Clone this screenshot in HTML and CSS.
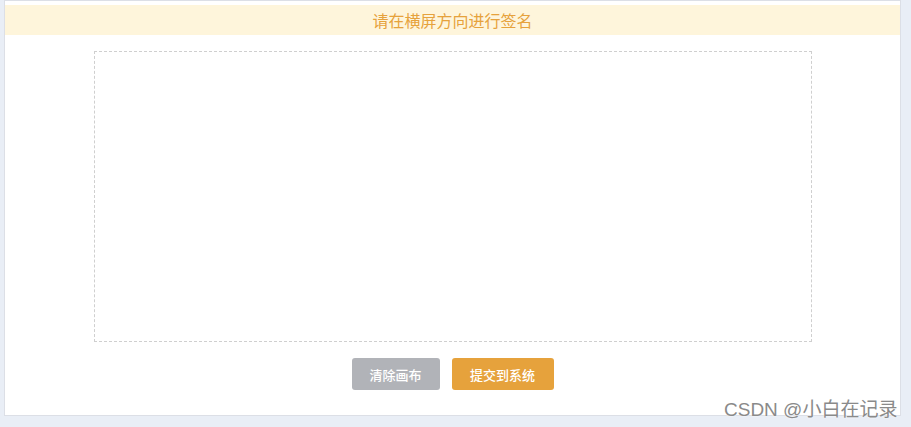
FILE: index.html
```html
<!DOCTYPE html>
<html lang="zh">
<head>
  <meta charset="UTF-8">
  <title>签名</title>
  <link rel="stylesheet" href="styles.css">
</head>
<body>
  <div class="panel">
    <div class="tip">请在横屏方向进行签名</div>
    <div class="board"></div>
    <div class="actions">
      <button class="btn btn-clear">清除画布</button>
      <button class="btn btn-submit">提交到系统</button>
    </div>
  </div>
  <div class="watermark">CSDN @小白在记录</div>
</body>
</html>
```

FILE: styles.css
```css
body {
  margin: 0;
  background-color: #e9eef6;
  font-family: "Noto Sans CJK SC", "Liberation Sans", sans-serif;
}

.panel {
  width: 895px;
  margin-left: 4px;
  padding-top: 4px;
  padding-bottom: 25px;
  background-color: #fff;
  border: 1px solid #dcdfe6;
}

.tip {
  height: 30px;
  line-height: 30px;
  background-color: #fef5db;
  color: #e6a23c;
  font-size: 16px;
  text-align: center;
}

.board {
  width: 716px;
  height: 289px;
  margin: 16px auto 0;
  border: 1px dashed #cfcfcf;
}

.actions {
  display: flex;
  justify-content: center;
  gap: 12px;
  margin-top: 16px;
}

.btn {
  height: 32px;
  padding: 0;
  border: none;
  border-radius: 3px;
  color: #fff;
  font-family: inherit;
  font-size: 13px;
  font-weight: 500;
  cursor: pointer;
}

.btn-clear {
  width: 88px;
  background-color: #b1b3b8;
}

.btn-submit {
  width: 102px;
  background-color: #e6a23c;
}

.watermark {
  position: absolute;
  left: 724px;
  top: 394px;
  color: #8a8a8a;
  font-family: "Liberation Sans", "Noto Sans CJK SC", sans-serif;
  font-size: 19px;
  text-shadow: 0 0 2px #fff;
}
```
